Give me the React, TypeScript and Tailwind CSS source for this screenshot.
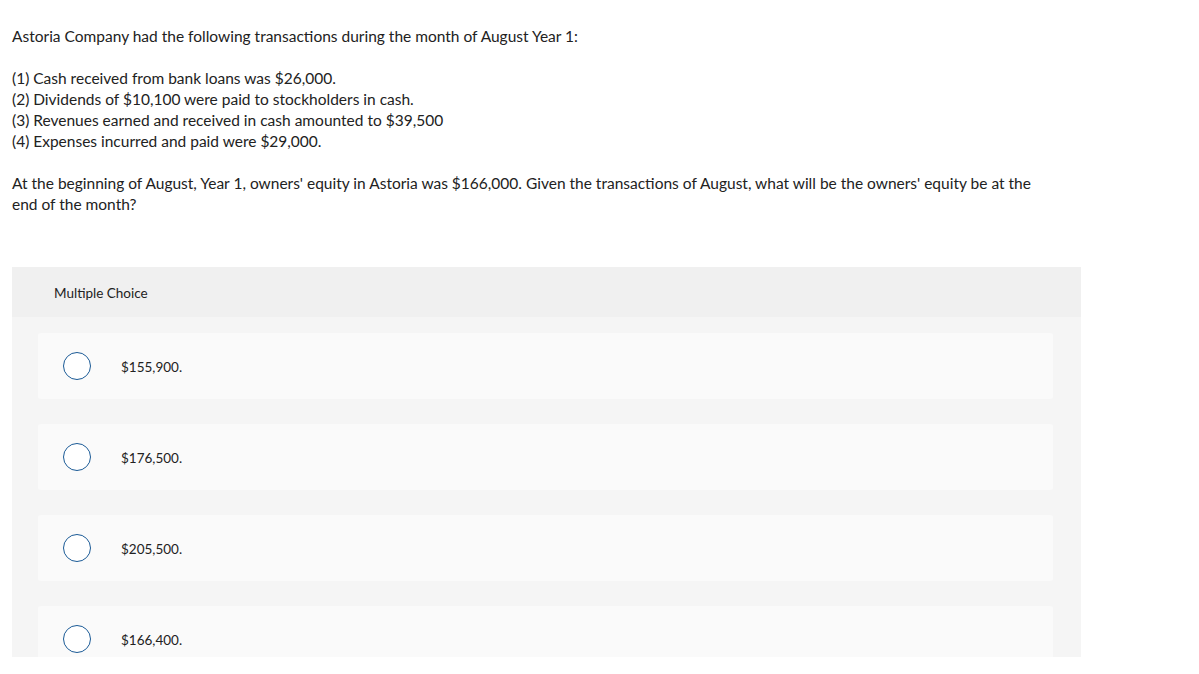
const items = [
  '(1) Cash received from bank loans was $26,000.',
  '(2) Dividends of $10,100 were paid to stockholders in cash.',
  '(3) Revenues earned and received in cash amounted to $39,500',
  '(4) Expenses incurred and paid were $29,000.',
]

const choices = ['$155,900.', '$176,500.', '$205,500.', '$166,400.']

export default function App() {
  return (
    <div className="h-[674px] overflow-hidden bg-white font-['Lato',sans-serif] text-[#222]">
      <div className="h-[657px] overflow-hidden px-3 pt-[26px]">
        <div className="w-[1069px] text-[15.5px] leading-[21px]">
          <p>Astoria Company had the following transactions during the month of August Year 1:</p>
          <div className="mt-[21px]">
            {items.map((t) => (
              <p key={t}>{t}</p>
            ))}
          </div>
          <p className="mt-[21px] pr-[24px]">
            At the beginning of August, Year 1, owners' equity in Astoria was $166,000. Given the
            transactions of August, what will be the owners' equity be at the end of the month?
          </p>
        </div>

        <div className="mt-[52px] w-[1069px] bg-[#f5f5f5]">
          <div className="flex h-[50px] items-center bg-[#f0f0f0] pt-[3px] pl-[42px] text-[13.5px]">
            Multiple Choice
          </div>
          <div className="flex flex-col gap-[25px] pt-4 pr-[28px] pb-4 pl-[26px]">
            {choices.map((c) => (
              <div
                key={c}
                className="flex h-[66px] items-center rounded-[3px] bg-[#fafafa] pl-[25px]"
              >
                <span className="size-[28px] shrink-0 rounded-full border-[1.5px] border-[#1a5a96] bg-white" />
                <span className="mt-[3px] ml-[30px] text-[13.5px]">{c}</span>
              </div>
            ))}
          </div>
        </div>
      </div>
    </div>
  )
}
